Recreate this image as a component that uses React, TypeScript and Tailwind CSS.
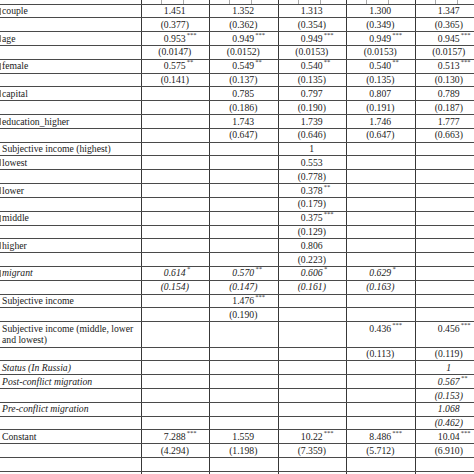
type Row = {
  label?: string;
  labelItalic?: boolean;
  italic?: boolean;
  mark?: boolean;
  tall?: boolean;
  vals: string[];
};

const E = ["", "", "", "", ""];

const ROWS: Row[] = [
  { label: "couple", mark: true, vals: ["1.451", "1.352", "1.313", "1.300", "1.347"] },
  { vals: ["(0.377)", "(0.362)", "(0.354)", "(0.349)", "(0.365)"] },
  { label: "age", mark: true, vals: ["0.953***", "0.949***", "0.949***", "0.949***", "0.945***"] },
  { vals: ["(0.0147)", "(0.0152)", "(0.0153)", "(0.0153)", "(0.0157)"] },
  { label: "female", mark: true, vals: ["0.575**", "0.549**", "0.540**", "0.540**", "0.513***"] },
  { vals: ["(0.141)", "(0.137)", "(0.135)", "(0.135)", "(0.130)"] },
  { label: "capital", mark: true, vals: ["", "0.785", "0.797", "0.807", "0.789"] },
  { vals: ["", "(0.186)", "(0.190)", "(0.191)", "(0.187)"] },
  { label: "education_higher", mark: true, vals: ["", "1.743", "1.739", "1.746", "1.777"] },
  { vals: ["", "(0.647)", "(0.646)", "(0.647)", "(0.663)"] },
  { label: "Subjective income (highest)", vals: ["", "", "1", "", ""] },
  { label: "lowest", mark: true, vals: ["", "", "0.553", "", ""] },
  { vals: ["", "", "(0.778)", "", ""] },
  { label: "lower", mark: true, vals: ["", "", "0.378**", "", ""] },
  { vals: ["", "", "(0.179)", "", ""] },
  { label: "middle", mark: true, vals: ["", "", "0.375***", "", ""] },
  { vals: ["", "", "(0.129)", "", ""] },
  { label: "higher", mark: true, vals: ["", "", "0.806", "", ""] },
  { vals: ["", "", "(0.223)", "", ""] },
  { label: "migrant", mark: true, labelItalic: true, italic: true, vals: ["0.614*", "0.570**", "0.606*", "0.629*", ""] },
  { italic: true, vals: ["(0.154)", "(0.147)", "(0.161)", "(0.163)", ""] },
  { label: "Subjective income", vals: ["", "1.476***", "", "", ""] },
  { vals: ["", "(0.190)", "", "", ""] },
  { label: "Subjective income (middle, lower and lowest)", tall: true, vals: ["", "", "", "0.436***", "0.456***"] },
  { vals: ["", "", "", "(0.113)", "(0.119)"] },
  { label: "Status (In Russia)", labelItalic: true, italic: true, vals: ["", "", "", "", "1"] },
  { label: "Post-conflict migration", labelItalic: true, italic: true, vals: ["", "", "", "", "0.567**"] },
  { italic: true, vals: ["", "", "", "", "(0.153)"] },
  { label: "Pre-conflict migration", labelItalic: true, italic: true, vals: ["", "", "", "", "1.068"] },
  { italic: true, vals: ["", "", "", "", "(0.462)"] },
  { label: "Constant", vals: ["7.288***", "1.559", "10.22***", "8.486***", "10.04***"] },
  { vals: ["(4.294)", "(1.198)", "(7.359)", "(5.712)", "(6.910)"] },
  { vals: E },
  { vals: E },
];

function Value({ text, italic }: { text: string; italic?: boolean }) {
  const m = text.match(/^(.*?)(\**)$/);
  const num = m ? m[1] : text;
  const stars = m ? m[2] : "";
  return (
    <span className={`relative ${italic ? "italic" : ""}`}>
      {num}
      {stars && (
        <span className="absolute left-full top-[-2px] pl-[1px] text-[6.5px] leading-none">
          {stars}
        </span>
      )}
    </span>
  );
}

function TopStrip() {
  return (
    <div className="flex h-[3.5px]">
      <div className="w-[141.5px] shrink-0 border-r-[1.5px] border-[#383838]" />
      {E.map((_, i) => (
        <div key={i} className="relative w-[68.5px] shrink-0 border-r-[1.5px] border-[#383838]">
          <span className="absolute left-[19px] top-0 h-full w-px bg-[#aaa]" />
          <span className="absolute left-[41px] top-0 h-full w-px bg-[#aaa]" />
        </div>
      ))}
    </div>
  );
}

function TableRow({ row }: { row: Row }) {
  return (
    <div
      className={`flex border-t border-[#4a4a4a] ${row.tall ? "h-[25.4px]" : "h-[13.82px]"}`}
    >
      <div
        className={`relative flex w-[141.5px] shrink-0 border-r-[1.5px] border-[#383838] pl-[1px] ${
          row.tall ? "items-start pt-[1px] leading-[11px]" : "items-center"
        }`}
      >
        {row.mark && <span className="absolute left-0 top-[3px] h-[7px] w-[0.75px] bg-[#888]" />}
        {row.label && (
          <span className={`pl-[1px] ${row.labelItalic ? "italic" : ""}`}>{row.label}</span>
        )}
      </div>
      {row.vals.map((v, i) => (
        <div
          key={i}
          className={`flex w-[68.5px] shrink-0 justify-center border-r-[1.5px] border-[#383838] pr-[1px] ${
            row.tall ? "items-start pt-[2px]" : "items-center"
          }`}
        >
          {v && <Value text={v} italic={row.italic} />}
        </div>
      ))}
    </div>
  );
}

export default function App() {
  return (
    <div className="h-[474px] w-[474px] overflow-hidden bg-white">
      <div className="w-[484px] font-['Liberation_Serif','Times_New_Roman',serif] text-[9.7px] leading-none text-[#1a1a1a]">
        <TopStrip />
        {ROWS.map((r, i) => (
          <TableRow key={i} row={r} />
        ))}
      </div>
    </div>
  );
}
